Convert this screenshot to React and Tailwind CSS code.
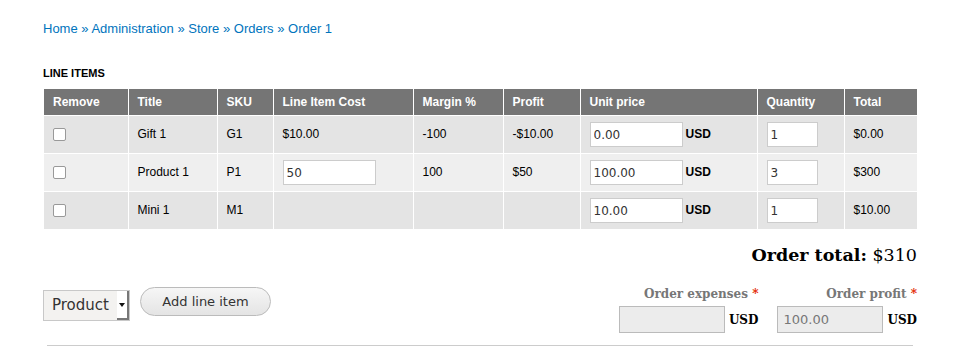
import { useState } from 'react';

const sans = { fontFamily: '"Liberation Sans", Arial, sans-serif' };

const rows = [
  { title: 'Gift 1', sku: 'G1', cost: '$10.00', margin: '-100', profit: '-$10.00', price: '0.00', qty: '1', total: '$0.00', bg: 'bg-[#e4e4e4]' },
  { title: 'Product 1', sku: 'P1', costInput: '50', margin: '100', profit: '$50', price: '100.00', qty: '3', total: '$300', bg: 'bg-[#efefef]' },
  { title: 'Mini 1', sku: 'M1', price: '10.00', qty: '1', total: '$10.00', bg: 'bg-[#e4e4e4]' },
];

function TextInput({ value, className = '' }) {
  return (
    <input
      type="text"
      defaultValue={value}
      className={`h-[25px] border border-[#cccccc] bg-white px-[3px] pt-[2px] text-[12px] text-[#333] font-['DejaVu_Sans',sans-serif] outline-none ${className}`}
    />
  );
}

function App() {
  const [checked, setChecked] = useState([false, false, false]);

  return (
    <div className="w-[963px] h-[346px] overflow-hidden bg-white text-black" style={sans}>
      <div className="pl-[43px] pr-[46px] pt-[20px]">
        {/* Breadcrumb */}
        <nav className="text-[13px] leading-[18px] text-[#0074bd]">
          <a>Home</a> » <a>Administration</a> » <a>Store</a> » <a>Orders</a> » <a>Order 1</a>
        </nav>

        <h2 className="mt-[28px] text-[11px] font-bold uppercase leading-[14px]">Line items</h2>

        <table className="mt-[9px] ml-[1px] w-[873px] border-collapse text-[12px] leading-[14px]">
          <thead>
            <tr className="h-[26px] bg-[#757575] text-left text-white">
              <th className="w-[84px] border-r border-white pl-[9px] font-bold">Remove</th>
              <th className="w-[89px] border-r border-white pl-[9px] font-bold">Title</th>
              <th className="w-[56px] border-r border-white pl-[9px] font-bold">SKU</th>
              <th className="w-[140px] border-r border-white pl-[9px] font-bold">Line Item Cost</th>
              <th className="w-[90px] border-r border-white pl-[9px] font-bold">Margin %</th>
              <th className="w-[77px] border-r border-white pl-[9px] font-bold">Profit</th>
              <th className="w-[177px] border-r border-white pl-[9px] font-bold">Unit price</th>
              <th className="w-[87px] border-r border-white pl-[9px] font-bold">Quantity</th>
              <th className="pl-[9px] font-bold">Total</th>
            </tr>
          </thead>
          <tbody>
            {rows.map((r, i) => (
              <tr key={r.sku} className={`h-[38px] border-t border-white ${r.bg}`}>
                <td className="border-r border-white pl-[9px]">
                  <input
                    type="checkbox"
                    checked={checked[i]}
                    onChange={() => setChecked(checked.map((c, j) => (j === i ? !c : c)))}
                    className="block h-[13px] w-[13px] appearance-none rounded-[2px] border border-[#999] bg-white"
                  />
                </td>
                <td className="border-r border-white pl-[9px]">{r.title}</td>
                <td className="border-r border-white pl-[9px]">{r.sku}</td>
                <td className="border-r border-white pl-[9px]">
                  {r.costInput ? <TextInput value={r.costInput} className="w-[93px]" /> : r.cost}
                </td>
                <td className="border-r border-white pl-[9px]">{r.margin}</td>
                <td className="border-r border-white pl-[9px]">{r.profit}</td>
                <td className="border-r border-white pl-[9px]">
                  <div className="flex items-center gap-[3px]">
                    <TextInput value={r.price} className="w-[93px]" />
                    <span className="font-bold">USD</span>
                  </div>
                </td>
                <td className="border-r border-white pl-[9px]">
                  <TextInput value={r.qty} className="w-[51px]" />
                </td>
                <td className="pl-[9px]">{r.total}</td>
              </tr>
            ))}
          </tbody>
        </table>

        <div className="mt-[14px] text-right text-[17.5px] leading-[24px] font-['DejaVu_Serif',serif]">
          <span className="font-bold">Order total:</span> $310
        </div>

        <div className="mt-[19px] flex items-start justify-between">
          <div className="flex items-start gap-[10px]">
            <div className="mt-[4px] flex h-[31px] w-[87px] items-stretch border border-[#c8c8c8] bg-[#f3f2f0] font-['DejaVu_Sans',sans-serif]">
              <span className="flex flex-1 items-center pl-[8px] text-[15px] text-[#333]">Product</span>
              <span className="flex w-[12px] items-center justify-center border-r-2 border-b-2 border-[#777] bg-white">
                <svg width="6" height="4" viewBox="0 0 6 4">
                  <path d="M0 0h6L3 4z" fill="#111" />
                </svg>
              </span>
            </div>
            <button className="mt-[1px] h-[29px] w-[131px] rounded-full border border-[#bbbbbb] bg-gradient-to-b from-[#f6f6f6] to-[#e4e4e4] text-[13px] text-[#333] font-['DejaVu_Sans',sans-serif]">
              Add line item
            </button>
          </div>

          <div className="flex gap-[19px] font-['DejaVu_Serif',serif]">
            <div className="flex flex-col items-end">
              <label className="text-[12px] leading-[16px] font-bold text-[#777]">
                Order expenses <span className="text-[#e32700]">*</span>
              </label>
              <div className="mt-[4px] flex items-center gap-[4px]">
                <div className="h-[27px] w-[106px] border border-[#bbbbbb] bg-[#ececec]" />
                <span className="text-[12px] font-bold">USD</span>
              </div>
            </div>
            <div className="flex flex-col items-end">
              <label className="text-[12px] leading-[16px] font-bold text-[#777]">
                Order profit <span className="text-[#e32700]">*</span>
              </label>
              <div className="mt-[4px] flex items-center gap-[4px]">
                <div className="flex h-[27px] w-[106px] items-center border border-[#bbbbbb] bg-[#ececec] pl-[5px] text-[13px] text-[#777] font-['DejaVu_Sans',sans-serif]">
                  100.00
                </div>
                <span className="text-[12px] font-bold">USD</span>
              </div>
            </div>
          </div>
        </div>

        <div className="mt-[12px] ml-[4px] mr-[4px] border-t border-[#cccccc]" />
      </div>
    </div>
  );
}

export default App;
